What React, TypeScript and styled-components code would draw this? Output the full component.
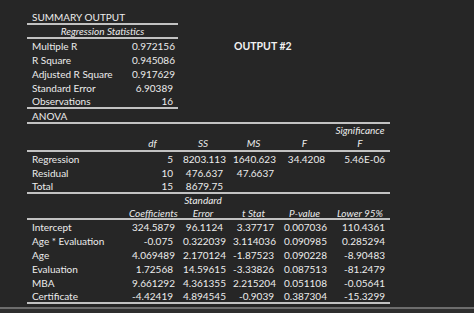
import React from "react";
import styled, { createGlobalStyle } from "styled-components";

const COLS = [100, 51, 50, 51, 51, 60];
const TEMPLATE = COLS.map((c) => `${c}px`).join(" ");
const SHORT = COLS[0] + COLS[1];
const FULL = COLS.reduce((a, b) => a + b, 0);

const GlobalStyle = createGlobalStyle`
  html, body {
    margin: 0;
    padding: 0;
    background: #262626;
    height: 100%;
    overflow: hidden;
  }
  body {
    font-family: "Lato", "Open Sans", sans-serif;
    font-size: 10px;
    color: #ececec;
  }
`;

const Page = styled.div`
  display: flex;
  flex-direction: column;
  height: 313px;
`;

const Sheet = styled.div`
  display: flex;
  flex-direction: column;
  padding: 11px 0 0 27px;
`;

type RuleKind = "none" | "short" | "full";

const Row = styled.div<{ $h?: number; $rule?: RuleKind; $header?: boolean }>`
  display: grid;
  grid-template-columns: ${TEMPLATE};
  height: ${(p) => p.$h ?? 14}px;
  align-items: ${(p) => (p.$header ? "end" : "center")};
  box-sizing: border-box;
  padding-bottom: ${(p) => (p.$rule && p.$rule !== "none" ? 1 : 0)}px;
  background: ${(p) =>
    p.$rule === "short"
      ? `linear-gradient(#c2c2c2, #c2c2c2) left bottom / ${SHORT}px 2px no-repeat`
      : p.$rule === "full"
      ? `linear-gradient(#c2c2c2, #c2c2c2) left bottom / ${FULL}px 2px no-repeat`
      : "none"};
`;

const Cell = styled.div<{
  $span?: number;
  $col?: number;
  $align?: "left" | "right" | "center";
  $italic?: boolean;
}>`
  grid-column: ${(p) => (p.$col ? `${p.$col} / span ${p.$span ?? 1}` : `span ${p.$span ?? 1}`)};
  text-align: ${(p) => p.$align ?? "right"};
  font-style: ${(p) => (p.$italic ? "italic" : "normal")};
  padding: 0 5px;
  white-space: nowrap;
  line-height: 13px;
`;

const Title = styled(Cell)`
  font-weight: 700;
  font-size: 10.5px;
  padding-left: 6px;
  color: #f2f2f2;
`;

const HeadCell = styled(Cell)`
  white-space: pre-line;
  text-align: center;
  font-style: italic;
  padding: 0 2px 1px;
`;

const Footer = styled.div`
  margin-top: 3px;
  flex: 1;
  border-top: 2px solid #6c6c6c;
  background: #2f2f2f;
`;

const regStats: [string, string][] = [
  ["Multiple R", "0.972156"],
  ["R Square", "0.945086"],
  ["Adjusted R Square", "0.917629"],
  ["Standard Error", "6.90389"],
  ["Observations", "16"],
];

const anova: string[][] = [
  ["Regression", "5", "8203.113", "1640.623", "34.4208", "5.46E-06"],
  ["Residual", "10", "476.637", "47.6637", "", ""],
  ["Total", "15", "8679.75", "", "", ""],
];

const coefs: string[][] = [
  ["Intercept", "324.5879", "96.1124", "3.37717", "0.007036", "110.4361"],
  ["Age * Evaluation", "-0.075", "0.322039", "3.114036", "0.090985", "0.285294"],
  ["Age", "4.069489", "2.170124", "-1.87523", "0.090228", "-8.90483"],
  ["Evaluation", "1.72568", "14.59615", "-3.33826", "0.087513", "-81.2479"],
  ["MBA", "9.661292", "4.361355", "2.215204", "0.051108", "-0.05641"],
  ["Certificate", "-4.42419", "4.894545", "-0.9039", "0.387304", "-15.3299"],
];

const DataRow: React.FC<{ cells: string[]; rule?: RuleKind }> = ({ cells, rule }) => (
  <Row $rule={rule}>
    {cells.map((c, i) => (
      <Cell key={i} $align={i === 0 ? "left" : "right"}>
        {c}
      </Cell>
    ))}
  </Row>
);

export default function App() {
  return (
    <Page>
      <GlobalStyle />
      <Sheet>
        <Row $rule="short">
          <Cell $span={2} $align="left">SUMMARY OUTPUT</Cell>
        </Row>
        <Row $rule="short">
          <Cell $span={2} $align="center" $italic>
            Regression Statistics
          </Cell>
        </Row>
        {regStats.map(([label, value], i) => (
          <Row key={label} $rule={i === regStats.length - 1 ? "short" : "none"}>
            <Cell $align="left">{label}</Cell>
            <Cell>{value}</Cell>
            {i === 0 && (
              <Title $col={4} $span={2} $align="left">
                OUTPUT #2
              </Title>
            )}
          </Row>
        ))}
        <Row $h={15} $rule="full">
          <Cell $span={6} $align="left">ANOVA</Cell>
        </Row>
        <Row $h={28} $rule="full" $header>
          <HeadCell />
          <HeadCell>df</HeadCell>
          <HeadCell>SS</HeadCell>
          <HeadCell>MS</HeadCell>
          <HeadCell>F</HeadCell>
          <HeadCell>{"Significance\nF"}</HeadCell>
        </Row>
        {anova.map((r, i) => (
          <DataRow key={r[0]} cells={r} rule={i === anova.length - 1 ? "full" : "none"} />
        ))}
        <Row $h={26} $rule="full" $header>
          <HeadCell />
          <HeadCell>Coefficients</HeadCell>
          <HeadCell>{"Standard\nError"}</HeadCell>
          <HeadCell>t Stat</HeadCell>
          <HeadCell>P-value</HeadCell>
          <HeadCell>Lower 95%</HeadCell>
        </Row>
        {coefs.map((r, i) => (
          <DataRow key={r[0]} cells={r} rule={i === coefs.length - 1 ? "full" : "none"} />
        ))}
      </Sheet>
      <Footer />
    </Page>
  );
}
